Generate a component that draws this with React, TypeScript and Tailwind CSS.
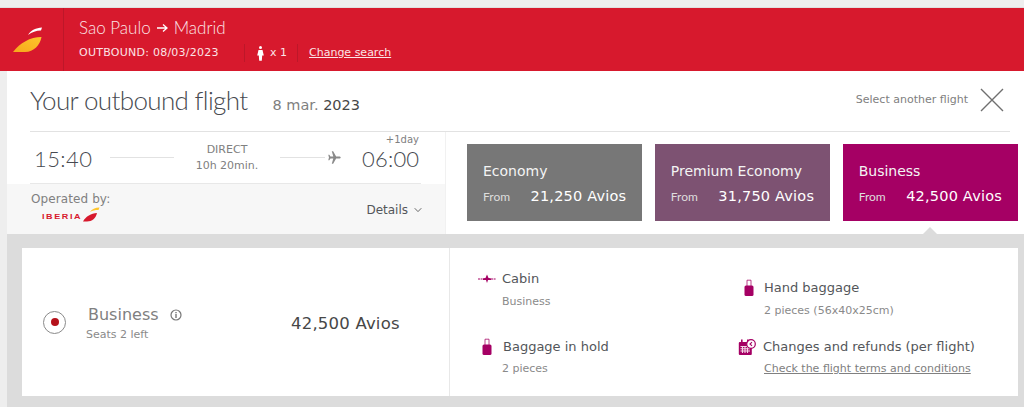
import React from "react";

const FeatherLogo = () => (
    <svg width="32" height="26" viewBox="0 0 32 26">
        <defs>
            <linearGradient id="wing" x1="0" y1="1" x2="1" y2="0">
                <stop offset="0" stopColor="#f7a81b" />
                <stop offset="1" stopColor="#fdc52c" />
            </linearGradient>
        </defs>
        <path d="M1 25 C8 16 18 10 29.5 10 C28 18 22 25 13 25 Z" fill="url(#wing)" />
        <path d="M16 8 C19 3 24 1 30 0.5 L29 3.5 C24 3.5 20 5 16 8 Z" fill="#fff" />
    </svg>
);

const SmallLogo = () => (
    <svg width="17" height="15" viewBox="0 0 17 15">
        <path d="M0 14.5 C3 9 8 6.5 14 6 C13 11 9 14.5 4 14.5 Z" fill="#d7192d" />
        <path d="M7 5 C9 2 12 0.7 16.5 0.5 L15.5 3 C12 3 9.5 3.5 7 5 Z" fill="#fdc52c" />
    </svg>
);

const Suitcase = ({ w = 12, h = 18 }: { w?: number; h?: number }) => (
    <svg width={w} height={h} viewBox="0 0 12 18">
        <path d="M4 7 V1.2 H8 V7" fill="none" stroke="#a50064" strokeWidth="1" opacity="0.75" />
        <rect x="1.5" y="6.5" width="9" height="10.5" rx="1.5" fill="#a50064" />
    </svg>
);

const CabinIcon = () => (
    <svg width="18" height="10" viewBox="0 0 18 10">
        <path d="M0 5 H18" stroke="#a50064" strokeWidth="1" strokeDasharray="2 0.6" />
        <path d="M9 0.5 L10.5 4 L13 4.5 V6 L10 6 L9 9 L8 6 L5 6 V4.5 L7.5 4 Z" fill="#a50064" />
    </svg>
);

const CalendarIcon = () => (
    <svg width="18" height="17" viewBox="0 0 18 17">
        <rect x="0.8" y="3" width="13" height="13" rx="1" fill="#a50064" />
        <rect x="3" y="0.5" width="1.6" height="3.5" fill="#a50064" />
        <rect x="9" y="0.5" width="1.6" height="3.5" fill="#a50064" />
        <path d="M2.5 7.5 H12 M2.5 9.8 H12 M2.5 12 H12 M4.5 7 V14 M7 7 V14 M9.5 7 V14" stroke="#f3d6e6" strokeWidth="1.1" />
        <circle cx="13" cy="5" r="4.3" fill="#fff" stroke="#a50064" strokeWidth="1.2" />
        <path d="M14 3.2 L12 5 L14 6.8" fill="none" stroke="#a50064" strokeWidth="1.1" />
    </svg>
);

const fareCards = [
    { name: "Economy", avios: "21,250 Avios", bg: "bg-[#777777]" },
    { name: "Premium Economy", avios: "31,750 Avios", bg: "bg-[#7d5272]" },
    { name: "Business", avios: "42,500 Avios", bg: "bg-[#a50064]" },
];

const App: React.FunctionComponent = () => {
    return (
        <div className="w-[1024px] h-[407px] overflow-hidden bg-[#eeeeee] pt-[7px] font-['DejaVu_Sans',sans-serif]">
            {/* top bar */}
            <div className="h-[64px] bg-[#d7192d] flex border-t border-[#e0e0e0]">
                <div className="w-[64px] border-r border-[#bd1729] flex items-center justify-center pr-[8px] pt-[1px]">
                    <FeatherLogo />
                </div>
                <div className="pl-[15px] pt-[9px] text-white">
                    <div className="flex items-center font-['Lato',sans-serif] font-light text-[17px] leading-[22px] text-[#fbe4e7]">
                        <span>Sao Paulo</span>
                        <svg className="mx-[6px]" width="11" height="10" viewBox="0 0 11 10">
                            <path d="M0 5 H9 M6 1.5 L10 5 L6 8.5" fill="none" stroke="#fff" strokeWidth="1.3" />
                        </svg>
                        <span>Madrid</span>
                    </div>
                    <div className="flex items-center mt-[4px] h-[20px] text-[11px] text-[#fbe4e7]">
                        <span className="w-[165px] tracking-[0.25px]">OUTBOUND: 08/03/2023</span>
                        <div className="h-[18px] border-l border-[#bd1729] pl-[12px] pr-[10px] flex items-center gap-[6px]">
                            <svg width="7" height="15" viewBox="0 0 7 15">
                                <circle cx="3.5" cy="1.6" r="1.5" fill="#fff" />
                                <path d="M1.5 4 H5.5 L6.8 9.5 H5.2 L4.8 14.8 H2.2 L1.8 9.5 H0.2 Z" fill="#fff" />
                            </svg>
                            <span>x 1</span>
                        </div>
                        <a className="border-l border-[#bd1729] h-[18px] pl-[11px] flex items-center">
                            <span className="underline">Change search</span>
                        </a>
                    </div>
                </div>
            </div>

            <div className="ml-[7px] bg-white relative">
                {/* title row */}
                <div className="mx-[23px] mr-[14px] h-[61px] border-b border-[#e2e2e2] flex items-center justify-between">
                    <div className="flex items-baseline pb-[1px]">
                        <span className="font-['Lato',sans-serif] font-light text-[26px] tracking-[-0.65px] text-[#474a50]">Your outbound flight</span>
                        <span className="ml-[25px] text-[14.5px] text-[#808080]">
                            8 mar. <span className="text-[#474747]">2023</span>
                        </span>
                    </div>
                    <div className="flex items-center pb-[3px] pr-[6px] gap-[12px]">
                        <span className="text-[11px] text-[#808080] pt-[2px]">Select another flight</span>
                        <svg width="24" height="24" viewBox="0 0 24 24">
                            <path d="M1 1 L23 23 M23 1 L1 23" stroke="#6f6f6f" strokeWidth="1.4" />
                        </svg>
                    </div>
                </div>

                {/* flight + fares */}
                <div className="flex h-[102px]">
                    <div className="w-[439px] border-r border-[#f1f1f1] flex flex-col">
                        <div className="h-[52px] mx-[23px] mr-[24px] border-b border-[#e8e8e8] flex items-center pl-[4px] relative bg-white">
                            <span className="font-['Lato',sans-serif] font-light text-[22px] leading-[22px] pt-[3px] text-[#474a50] w-[76px] tracking-[0.4px]">15:40</span>
                            <div className="w-[64px] h-[1px] bg-[#e2e2e2]" />
                            <div className="w-[106px] text-center text-[11px] leading-[16px] text-[#808080] pt-[1px]">
                                <div>DIRECT</div>
                                <div>10h 20min.</div>
                            </div>
                            <div className="w-[45px] h-[1px] bg-[#e2e2e2]" />
                            <svg className="ml-[3px]" width="13" height="13" viewBox="0 0 24 24">
                                <path d="M23.5 12 C23.5 10.8 22 10 20.5 10 H15 L9.5 0.5 H7 L9.8 10 H4.5 L2.5 7 H0.5 L1.8 12 L0.5 17 H2.5 L4.5 14 H9.8 L7 23.5 H9.5 L15 14 H20.5 C22 14 23.5 13.2 23.5 12 Z" fill="#8a8a8a" />
                            </svg>
                            <span className="ml-[21px] font-['Lato',sans-serif] font-light text-[22px] leading-[22px] pt-[3px] text-[#474a50] tracking-[0.2px]">06:00</span>
                            <span className="absolute right-[2px] top-[2px] text-[10px] leading-[12px] text-[#808080]">+1day</span>
                        </div>
                        <div className="flex-1 bg-[#f7f7f7] pl-[24px] pr-[23px] flex justify-between">
                            <div className="pt-[8px]">
                                <div className="text-[12px] leading-[15px] text-[#808080] tracking-[0.1px]">Operated by:</div>
                                <div className="flex items-end pl-[11px] h-[16px] -mt-[1px]">
                                    <span className="font-['Liberation_Sans',sans-serif] font-bold text-[9px] leading-[12px] tracking-[1.6px] text-[#d7192d] scale-y-[0.85] mr-[1px]">IBERIA</span>
                                    <SmallLogo />
                                </div>
                            </div>
                            <div className="flex items-center gap-[6px] pt-[1px]">
                                <span className="text-[12px] text-[#53565a]">Details</span>
                                <svg width="8" height="6" viewBox="0 0 9 6">
                                    <path d="M0.8 1 L4.5 4.8 L8.2 1" fill="none" stroke="#555" strokeWidth="1" />
                                </svg>
                            </div>
                        </div>
                    </div>
                    <div className="flex-1 flex gap-[12.5px] pl-[21px] pt-[12px] pr-[6px]">
                        {fareCards.map((card, index) => (
                            <div key={index} className={`${card.bg} flex-1 h-[77px] pl-[16px] pr-[16px] pt-[18px] text-white`}>
                                <div className="text-[14px] leading-[18px] text-[#f4f4f4]">{card.name}</div>
                                <div className="flex items-center justify-between mt-[8px] h-[18px]">
                                    <span className="font-['Lato',sans-serif] text-[12px] text-[#dddddd]">From</span>
                                    <span className="text-[14.5px] tracking-[0.2px]">{card.avios}</span>
                                </div>
                            </div>
                        ))}
                    </div>
                </div>
                <div className="absolute right-[87px] top-[156px] w-0 h-0 border-l-[7px] border-r-[7px] border-b-[7px] border-l-transparent border-r-transparent border-b-[#dcdcdc]" />

                {/* selected fare */}
                <div className="bg-[#dcdcdc] h-[173px] pt-[14px] pl-[15px] pr-[6px]">
                    <div className="bg-white h-[148px] flex">
                        <div className="w-[428px] border-r border-[#e8e8e8] flex items-center pl-[21px]">
                            <div className="w-[23px] h-[23px] rounded-full border border-[#8a8a8a] flex items-center justify-center">
                                <div className="w-[8px] h-[8px] rounded-full bg-[#b5121b]" />
                            </div>
                            <div className="ml-[20px] w-[205px] pt-[4px]">
                                <div className="flex items-center pl-[2px] gap-[11px] text-[16px] leading-[20px] text-[#808080]">
                                    <span>Business</span>
                                    <svg width="12" height="12" viewBox="0 0 12 12">
                                        <circle cx="6" cy="6" r="5" fill="none" stroke="#777" strokeWidth="1.2" />
                                        <path d="M6 5 V9 M6 3 V4.2" stroke="#777" strokeWidth="1.4" />
                                    </svg>
                                </div>
                                <div className="text-[11px] leading-[16px] mt-[2px] text-[#8a8a8a]">Seats 2 left</div>
                            </div>
                            <span className="text-[16.5px] text-[#474747] tracking-[0.2px] pt-[4px]">42,500 Avios</span>
                        </div>
                        <div className="flex-1 relative pl-[28px] pt-[21px] grid grid-cols-[262px_1fr] text-[13px]">
                            <div>
                                <div className="flex items-center h-[20px] gap-[6px] text-[#53565a]">
                                    <CabinIcon />
                                    <span>Cabin</span>
                                </div>
                                <div className="mt-[5px] pl-[24px] text-[11px] leading-[16px] text-[#8a8a8a]">Business</div>
                                <div className="mt-[27px] flex items-center h-[20px] text-[#53565a]">
                                    <div className="w-[25px] pl-[3px] flex"><Suitcase /></div>
                                    <span>Baggage in hold</span>
                                </div>
                                <div className="mt-[4px] pl-[24px] text-[11px] leading-[16px] text-[#8a8a8a]">2 pieces</div>
                            </div>
                            <div className="-ml-[1px]">
                                <div className="mt-[9px] flex items-center h-[20px] text-[#53565a]">
                                    <div className="w-[25px] pl-[4px] flex"><Suitcase /></div>
                                    <span>Hand baggage</span>
                                </div>
                                <div className="mt-[5px] pl-[25px] text-[11px] leading-[16px] text-[#8a8a8a]">2 pieces (56x40x25cm)</div>
                                <div className="mt-[18px] flex items-center h-[20px] text-[#53565a]">
                                    <div className="w-[25px] -ml-[1px] flex"><CalendarIcon /></div>
                                    <span>Changes and refunds (per flight)</span>
                                </div>
                                <div className="mt-[4px] pl-[25px] text-[11px] leading-[16px] text-[#808080] underline">Check the flight terms and conditions</div>
                            </div>
                        </div>
                    </div>
                </div>
            </div>
        </div>
    );
};

export default App;
